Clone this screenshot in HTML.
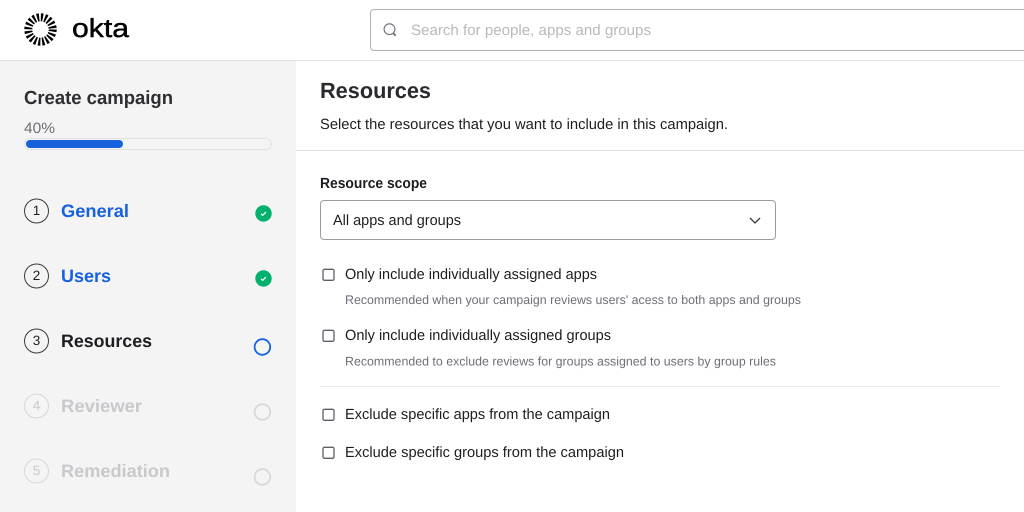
<!DOCTYPE html>
<html lang="en"><head><meta charset="utf-8"><title>Create campaign</title>
<style>
html,body{margin:0;padding:0;background:#fff;width:1024px;height:512px;overflow:hidden}
svg{display:block}
text{font-family:"Liberation Sans",Arial,sans-serif;fill:#1d1d21;text-rendering:geometricPrecision}
.b{font-weight:700}
.g{fill:#1662dd}
.d{fill:#c9c9cd}
.s{font-size:12.5px;fill:#6e6e78}
.t{font-size:14.8px}
</style></head><body>
<svg width="1024" height="512" viewBox="0 0 1024 512" xmlns="http://www.w3.org/2000/svg">
<rect width="1024" height="512" fill="#fff"/>
<!-- sidebar -->
<rect x="0" y="61" width="296" height="451" fill="#f4f4f4"/>
<rect x="0" y="60" width="1024" height="1" fill="#e1e1e1"/>
<rect x="296" y="150" width="728" height="1" fill="#e1e1e1"/>
<!-- logo -->
<circle cx="40.5" cy="29.5" r="12.2" fill="none" stroke="#000" stroke-width="8" stroke-dasharray="2.1 1.733"/>
<text x="72" y="37" font-size="26" textLength="57" lengthAdjust="spacingAndGlyphs" style="fill:#000;stroke:#000;stroke-width:.45">okta</text>
<!-- search -->
<rect x="370.5" y="9.5" width="680" height="41" rx="3.500" fill="#fff" stroke="#aeaeb6"/>
<circle cx="389.500" cy="29.200" r="5.400" fill="none" stroke="#6e6e78" stroke-width="1.100"/>
<path d="M393.300 33.200l2.400 2.600" stroke="#6e6e78" stroke-width="1.800" fill="none"/>
<text x="411" y="35" font-size="15" textLength="240" lengthAdjust="spacingAndGlyphs" style="fill:#b9b9be">Search for people, apps and groups</text>
<!-- progress -->
<text x="24" y="104" class="b" font-size="19" textLength="149" lengthAdjust="spacingAndGlyphs" style="fill:#2e2e33">Create campaign</text>
<text x="24" y="133" font-size="15" textLength="31" lengthAdjust="spacingAndGlyphs" style="fill:#6e6e78">40%</text>
<rect x="24.5" y="138.5" width="247" height="11" rx="5.5" fill="#f4f4f4" stroke="#e1e1e1"/>
<rect x="26" y="140" width="97" height="8" rx="4" fill="#1662dd"/>
<!-- steps -->
<g fill="none" stroke="#3a3a40" stroke-width="1"><circle cx="36.5" cy="211" r="12"/><circle cx="36.5" cy="276" r="12"/><circle cx="36.5" cy="341" r="12"/></g>
<g fill="none" stroke="#d7d7dc" stroke-width="1"><circle cx="36.5" cy="406" r="12"/><circle cx="36.5" cy="471" r="12"/></g>
<g font-size="13.5" text-anchor="middle">
<text x="36.5" y="215.200">1</text><text x="36.5" y="280.200">2</text><text x="36.5" y="345.200">3</text>
<text x="36.5" y="410.200" class="d">4</text><text x="36.5" y="475.200" class="d">5</text></g>
<g font-size="18">
<text x="61" y="217" class="b g" textLength="68" lengthAdjust="spacingAndGlyphs">General</text>
<text x="61" y="282" class="b g" textLength="50" lengthAdjust="spacingAndGlyphs">Users</text>
<text x="61" y="347" class="b" textLength="91" lengthAdjust="spacingAndGlyphs">Resources</text>
<text x="61" y="412" class="b d" textLength="81" lengthAdjust="spacingAndGlyphs">Reviewer</text>
<text x="61" y="477" class="b d" textLength="109" lengthAdjust="spacingAndGlyphs">Remediation</text>
</g>
<circle cx="263.5" cy="213.500" r="8.200" fill="#00b06d"/>
<path d="M261 213.800l1.700 1.600 3.200-3.300" fill="none" stroke="#fff" stroke-width="1.300"/>
<circle cx="263.5" cy="278.500" r="8.200" fill="#00b06d"/>
<path d="M261 278.800l1.700 1.600 3.200-3.300" fill="none" stroke="#fff" stroke-width="1.300"/>
<circle cx="262.400" cy="347" r="7.800" fill="none" stroke="#1662dd" stroke-width="1.800"/>
<circle cx="262.400" cy="412" r="7.800" fill="none" stroke="#d7d7dc" stroke-width="1.800"/>
<circle cx="262.400" cy="477" r="7.800" fill="none" stroke="#d7d7dc" stroke-width="1.800"/>
<!-- main -->
<text x="320" y="98" class="b" font-size="22" textLength="111" lengthAdjust="spacingAndGlyphs" style="fill:#2a2a2e">Resources</text>
<text x="320" y="129" class="t" textLength="408" lengthAdjust="spacingAndGlyphs">Select the resources that you want to include in this campaign.</text>
<text x="320" y="188" class="b t" textLength="107" lengthAdjust="spacingAndGlyphs">Resource scope</text>
<rect x="320.500" y="200.500" width="455" height="39" rx="3.500" fill="#fff" stroke="#9a9aa2"/>
<text x="333" y="225" class="t" textLength="128" lengthAdjust="spacingAndGlyphs">All apps and groups</text>
<path d="M750 218l5 5 5-5" fill="none" stroke="#3a3a40" stroke-width="1.300"/>
<g fill="#fff" stroke="#5f5f68" stroke-width="1.300">
<rect x="323" y="269.300" width="11" height="11" rx="1.500"/>
<rect x="323" y="330.300" width="11" height="11" rx="1.500"/>
<rect x="323" y="409.300" width="11" height="11" rx="1.500"/>
<rect x="323" y="447.300" width="11" height="11" rx="1.500"/>
</g>
<text x="345" y="279" class="t" textLength="252" lengthAdjust="spacingAndGlyphs">Only include individually assigned apps</text>
<text x="345" y="304" class="s" textLength="456" lengthAdjust="spacingAndGlyphs">Recommended when your campaign reviews users' acess to both apps and groups</text>
<text x="345" y="340" class="t" textLength="266" lengthAdjust="spacingAndGlyphs">Only include individually assigned groups</text>
<text x="345" y="365.500" class="s" textLength="431" lengthAdjust="spacingAndGlyphs">Recommended to exclude reviews for groups assigned to users by group rules</text>
<rect x="320" y="386" width="680" height="1" fill="#ebebed"/>
<text x="345" y="419" class="t" textLength="265" lengthAdjust="spacingAndGlyphs">Exclude specific apps from the campaign</text>
<text x="345" y="457" class="t" textLength="279" lengthAdjust="spacingAndGlyphs">Exclude specific groups from the campaign</text>
</svg>
</body></html>
